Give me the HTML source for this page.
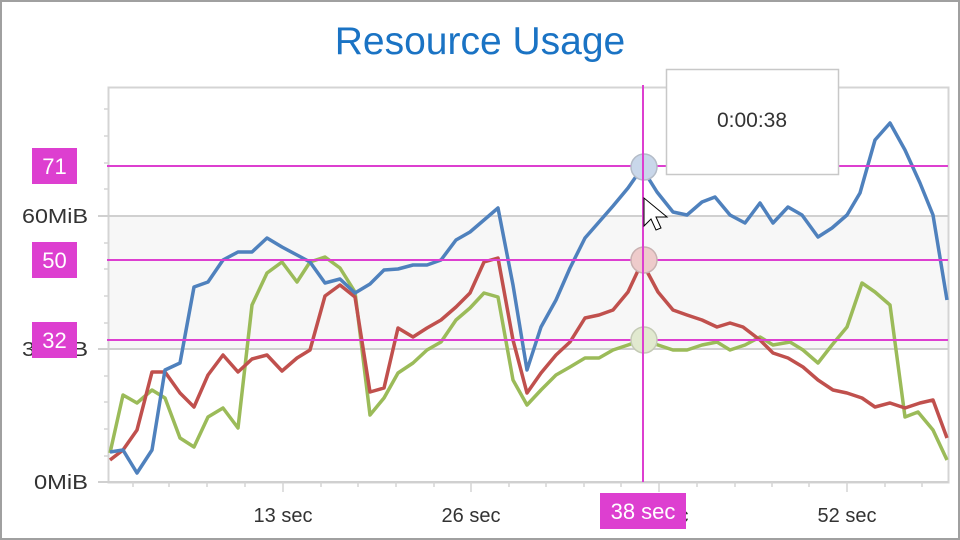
<!DOCTYPE html>
<html><head><meta charset="utf-8"><style>
html,body{margin:0;padding:0;background:#fff;}
body{width:960px;height:540px;overflow:hidden;font-family:"Liberation Sans",sans-serif;}
</style></head><body>
<svg width="960" height="540" viewBox="0 0 960 540" xmlns="http://www.w3.org/2000/svg" style="display:block">
<rect x="1" y="1" width="958" height="538" fill="#fff" stroke="#a0a0a0" stroke-width="2"/>
<text x="480" y="54" text-anchor="middle" font-family="Liberation Sans, sans-serif" font-size="39" fill="#1a73c4">Resource Usage</text>
<rect x="109" y="216" width="839" height="133" fill="#f7f7f7"/>
<rect x="108.5" y="87.5" width="840" height="395" fill="none" stroke="#d4d4d4" stroke-width="2"/>
<line x1="98" y1="216" x2="948" y2="216" stroke="#d0d0d0" stroke-width="2"/>
<line x1="98" y1="349" x2="948" y2="349" stroke="#d0d0d0" stroke-width="2"/>
<line x1="98" y1="482" x2="948" y2="482" stroke="#d0d0d0" stroke-width="2"/>
<g stroke="#d4d4d4" stroke-width="1.5">
<line x1="104" y1="109" x2="109" y2="109"/><line x1="104" y1="136" x2="109" y2="136"/><line x1="104" y1="163" x2="109" y2="163"/><line x1="104" y1="189" x2="109" y2="189"/>
<line x1="104" y1="243" x2="109" y2="243"/><line x1="104" y1="269" x2="109" y2="269"/><line x1="104" y1="296" x2="109" y2="296"/><line x1="104" y1="323" x2="109" y2="323"/>
<line x1="104" y1="376" x2="109" y2="376"/><line x1="104" y1="402" x2="109" y2="402"/><line x1="104" y1="429" x2="109" y2="429"/><line x1="104" y1="456" x2="109" y2="456"/>
<line x1="133" y1="482" x2="133" y2="487"/><line x1="169" y1="482" x2="169" y2="487"/><line x1="207" y1="482" x2="207" y2="487"/><line x1="245" y1="482" x2="245" y2="487"/>
<line x1="283" y1="482" x2="283" y2="492"/>
<line x1="321" y1="482" x2="321" y2="487"/><line x1="358" y1="482" x2="358" y2="487"/><line x1="396" y1="482" x2="396" y2="487"/><line x1="434" y1="482" x2="434" y2="487"/>
<line x1="471" y1="482" x2="471" y2="492"/>
<line x1="509" y1="482" x2="509" y2="487"/><line x1="546" y1="482" x2="546" y2="487"/><line x1="584" y1="482" x2="584" y2="487"/><line x1="621" y1="482" x2="621" y2="487"/>
<line x1="659" y1="482" x2="659" y2="492"/>
<line x1="697" y1="482" x2="697" y2="487"/><line x1="735" y1="482" x2="735" y2="487"/><line x1="772" y1="482" x2="772" y2="487"/><line x1="809" y1="482" x2="809" y2="487"/>
<line x1="847" y1="482" x2="847" y2="492"/>
<line x1="885" y1="482" x2="885" y2="487"/><line x1="922" y1="482" x2="922" y2="487"/>
</g>
<g font-family="Liberation Sans, sans-serif" font-size="20" fill="#333">
<text x="88" y="223" text-anchor="end" textLength="66" lengthAdjust="spacingAndGlyphs">60MiB</text>
<text x="88" y="356" text-anchor="end" textLength="66" lengthAdjust="spacingAndGlyphs">30MiB</text>
<text x="88" y="489" text-anchor="end" textLength="54" lengthAdjust="spacingAndGlyphs">0MiB</text>
<text x="283" y="522" text-anchor="middle">13 sec</text>
<text x="471" y="522" text-anchor="middle">26 sec</text>
<text x="659" y="522" text-anchor="middle">39 sec</text>
<text x="847" y="522" text-anchor="middle">52 sec</text>
</g>
<g fill="none" stroke-width="3.5" stroke-linejoin="round">
<polyline stroke="#9bbb59" points="110,453 123,395 137,403 152,390 165,398 180,438 194,447 208,417 223,408 238,428 252,305 267,273 282,262 297,282 310,262 325,257 340,268 355,292 370,415 384,398 398,373 413,363 427,350 441,342 456,320 470,308 484,293 498,297 513,380 527,405 541,390 556,375 570,367 585,358 599,358 613,350 628,345 642,340 658,345 673,350 687,350 702,345 717,342 730,350 745,345 760,337 773,345 790,342 803,350 818,363 832,345 847,327 862,283 875,292 890,305 905,417 918,412 933,430 947,460"/>
<polyline stroke="#c0504d" points="110,460 123,450 137,430 152,372 165,372 180,393 194,407 208,375 223,355 238,372 252,359 267,355 282,371 297,358 310,350 325,296 340,285 355,297 370,392 384,388 398,328 413,337 427,328 441,320 456,307 470,293 484,262 498,258 513,340 527,393 541,373 556,355 570,342 585,318 599,315 613,310 628,292 642,262 658,292 673,310 687,315 702,320 717,327 730,323 743,327 760,340 773,353 788,358 803,367 818,380 833,390 847,393 862,398 875,407 890,403 905,408 920,403 933,400 947,438"/>
<polyline stroke="#4f81bd" points="110,452 123,450 137,473 152,450 165,370 180,363 194,287 208,282 223,260 238,252 252,252 267,238 282,247 297,255 310,262 325,283 340,279 355,293 370,284 384,270 398,269 413,265 427,265 441,260 456,240 470,232 484,220 498,208 513,285 527,370 541,327 556,300 570,268 585,238 599,222 613,206 628,188 642,168 657,192 673,212 687,215 702,202 715,197 730,215 745,223 760,203 773,223 788,207 802,215 818,237 832,228 847,215 860,193 875,140 890,123 905,150 920,183 933,215 947,300"/>
</g>
<g stroke="#dd3fd0" stroke-width="2">
<line x1="107" y1="166" x2="948" y2="166"/>
<line x1="107" y1="260" x2="948" y2="260"/>
<line x1="107" y1="340" x2="948" y2="340"/>
</g>
<circle cx="644" cy="167" r="13" fill="#c9d7ea" stroke="#b4bcc8" stroke-width="1.5"/>
<circle cx="644" cy="260" r="13" fill="#eecbcb" stroke="#c9b1b1" stroke-width="1.5"/>
<circle cx="644" cy="340" r="13" fill="#e1e9cf" stroke="#c4cab5" stroke-width="1.5"/>
<line x1="643" y1="85" x2="643" y2="482" stroke="#dd3fd0" stroke-width="2"/>
<rect x="666.5" y="69.5" width="172" height="105" fill="#fff" stroke="#c8c8c8" stroke-width="1.5"/>
<text x="752" y="127" text-anchor="middle" font-family="Liberation Sans, sans-serif" font-size="21" fill="#333">0:00:38</text>
<path d="M644,198 L644,226 L651,219 L656,230 L661,228 L656,217 L667,217 Z" fill="#fff" stroke="#000" stroke-width="1"/>
<g font-family="Liberation Sans, sans-serif" font-size="22" fill="#fff">
<rect x="32" y="148" width="45" height="36" fill="#dd3fd0"/><text x="54.5" y="174" text-anchor="middle">71</text>
<rect x="32" y="242" width="45" height="36" fill="#dd3fd0"/><text x="54.5" y="268" text-anchor="middle">50</text>
<rect x="32" y="322" width="45" height="36" fill="#dd3fd0"/><text x="54.5" y="348" text-anchor="middle">32</text>
<rect x="600" y="493" width="86" height="36" fill="#dd3fd0"/><text x="643" y="519" text-anchor="middle">38 sec</text>
</g>
</svg>
</body></html>
